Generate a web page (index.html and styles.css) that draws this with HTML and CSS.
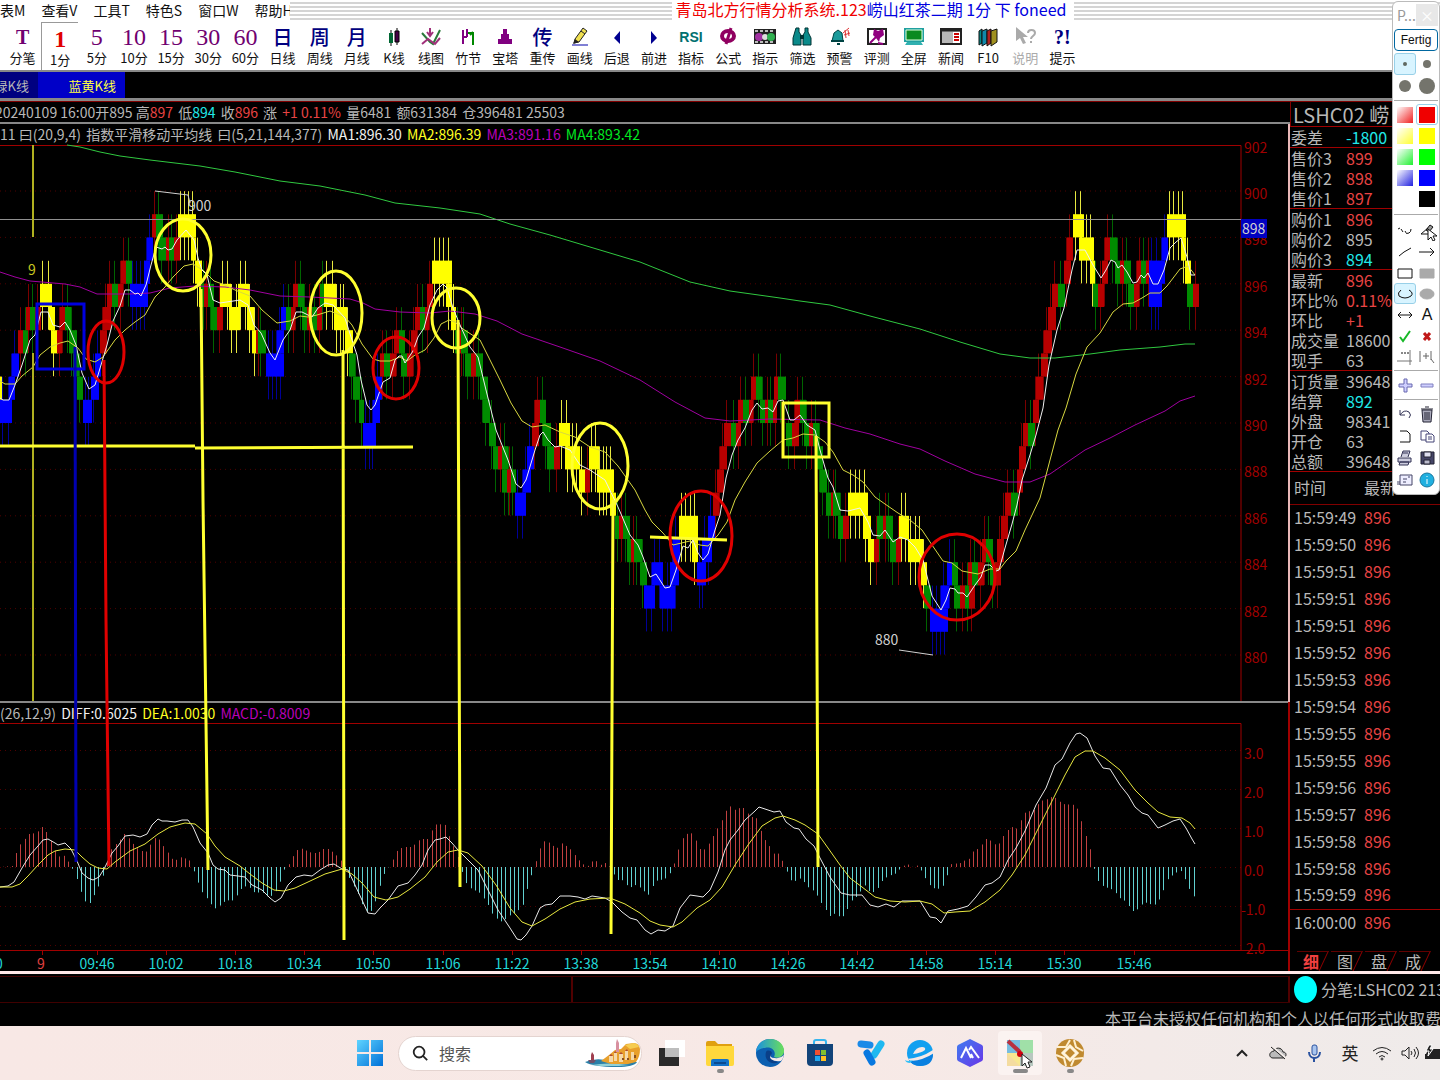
FILE: index.html
```html
<!DOCTYPE html>
<html lang="zh-CN">
<head>
    <meta charset="UTF-8">
    <meta name="viewport" content="width=device-width, initial-scale=1.0">
    <title>青岛北方行情分析系统</title>
    <link rel="stylesheet" href="styles.css">
</head>
<body>
    <header class="menubar">
        <nav class="menus">
            <button>表M</button>
            <button>查看V</button>
            <button>工具T</button>
            <button>特色S</button>
            <button>窗口W</button>
            <button>帮助H</button>
        </nav>
        <h1 class="title"><span class="red">青岛北方行情分析系统.123</span><span class="blue">崂山红茶二期 1分 下 foneed</span></h1>
    </header>

    <div class="toolbar">
        <button><span class="glyph small">T</span>分笔</button>
        <button class="pressed"><span class="glyph">1</span>1分</button>
        <button><span class="glyph">5</span>5分</button>
        <button><span class="glyph">10</span>10分</button>
        <button><span class="glyph">15</span>15分</button>
        <button><span class="glyph">30</span>30分</button>
        <button><span class="glyph">60</span>60分</button>
        <button><span class="glyph han">日</span>日线</button>
        <button><span class="glyph han">周</span>周线</button>
        <button><span class="glyph han">月</span>月线</button>
        <button><svg viewBox="0 0 24 22"><path d="M9 4v16M15 2v17" stroke="#000"/><path d="M7 7h4v10H7z" fill="#063"/><path d="M13 5h4v11h-4z" fill="#404" stroke="#000"/></svg>K线</button>
        <button><svg viewBox="0 0 24 22" fill="none" stroke-width="2"><path d="M3 7l8 9 3 2 7-14" stroke="#2a7a3a"/><path d="M3 18l6-5 7 5 5-6M11 2v8M8 6l3 4 3-4" stroke="#a0307a"/></svg>线图</button>
        <button><svg viewBox="0 0 24 22" fill="none" stroke-width="2"><path d="M7 4v14M7 11h4M11 3v8" stroke="#800080"/><path d="M12 7h5v12M14 9l3-3" stroke="#080"/></svg>竹节</button>
        <button><svg viewBox="0 0 24 22" fill="#800080"><path d="M10 3h4v5h2v5h3v5H5v-5h3V8h2z"/></svg>宝塔</button>
        <button><span class="glyph han">传</span>重传</button>
        <button><svg viewBox="0 0 24 22"><path d="M7 13L15 2l4 3-8 11-5 1z" fill="#f0e050" stroke="#222"/><path d="M13 5l4 3" stroke="#222"/><path d="M5 18l2-5 4 3z" fill="#222"/><path d="M4 19h16" stroke="#00a"/></svg>画线</button>
        <button><svg viewBox="0 0 24 22" fill="#000090"><path d="M15 5v13l-6-6z"/></svg>后退</button>
        <button><svg viewBox="0 0 24 22" fill="#000090"><path d="M9 5v13l6-6z"/></svg>前进</button>
        <button><span class="glyph rsi">RSI</span>指标</button>
        <button><svg viewBox="0 0 24 22" fill="none" stroke="#900060" stroke-width="4"><ellipse cx="12" cy="10" rx="6" ry="5"/><path d="M15 2L10 18" stroke-width="3"/></svg>公式</button>
        <button><svg viewBox="0 0 24 22"><path d="M1 3h22v15H1z" fill="#222"/><path d="M2 5h20M2 16h20" stroke="#bbb" stroke-width="2" stroke-dasharray="3 2"/><circle cx="6" cy="11" r="4" fill="#a030a0"/><circle cx="12" cy="11" r="3" fill="#ddd"/><circle cx="18" cy="11" r="4" fill="#30b050"/></svg>指示</button>
        <button><svg viewBox="0 0 24 22"><path d="M6 2h3v4l2 3v10H3v-7zM15 2h3v4l3 6v7h-8V9l2-3z" fill="#0a8a8a" stroke="#033"/><path d="M10 9h4v4h-4z" fill="#033"/></svg>筛选</button>
        <button><svg viewBox="0 0 24 22"><path d="M4 15l2-8 4-3 4 3 1 8z" fill="#1a9a9a" stroke="#044"/><path d="M3 15h13M9 18h3" stroke="#044" stroke-width="2"/><path d="M15 7l6-5M16 9l6-2M17 4l1 8M20 4l1 6" stroke="#d33"/></svg>预警</button>
        <button><svg viewBox="0 0 24 22"><path d="M3 3h18v15H3z" fill="#fff" stroke="#222" stroke-width="2"/><path d="M9 3l4 2 5-2 1 6-4 3-1 4-3-4-3-3z" fill="#900080"/><path d="M5 17l6-6M13 17l5 1" stroke="#900080" stroke-width="2"/></svg>评测</button>
        <button><svg viewBox="0 0 24 22"><path d="M2 2h20v14H2z" fill="#20a0a0"/><path d="M4 4h16v10H4z" fill="#0a8a20" stroke="#dfd"/><path d="M5 16h14l2 3H3z" fill="#30b0b0"/></svg>全屏</button>
        <button><svg viewBox="0 0 24 22"><path d="M2 3h20v15H2z" fill="#b8b8b8" stroke="#222" stroke-width="2"/><path d="M2 4h20" stroke="#222" stroke-width="3"/><path d="M14 6h7v11h-7z" fill="#fff"/><path d="M15 8h5M15 11h5M15 14h5" stroke="#c00" stroke-width="2"/></svg>新闻</button>
        <button><svg viewBox="0 0 24 22" stroke="#111"><path d="M3 5l3-2v14l-3 2z" fill="#088"/><path d="M6 5l5-2v14l-5 3z" fill="#18a"/><path d="M11 5l4-2v14l-4 3z" fill="#b02020"/><path d="M15 5l6-2v13l-6 4z" fill="#a09020"/></svg>F10</button>
        <button disabled><svg viewBox="0 0 24 22" fill="#aaa"><path d="M3 1v14l4-3 3 6 3-1-3-6h5z"/><path d="M15 7c0-4 7-4 7 0 0 3-4 3-4 6M18 15v2" fill="none" stroke="#aaa" stroke-width="2"/></svg>说明</button>
        <button><span class="glyph tip">?!</span>提示</button>
    </div>

    <div class="tabs">
        <button class="cut">绿K线</button>
        <button class="active">蓝黄K线</button>
    </div>

    <main class="workspace">
        <section class="left">
            <div class="quote">20240109 16:00开895 <span>高</span><span class="up">897</span> <span class="item">低</span><span class="down">894</span> <span class="item">收</span><span class="up">896</span> <span class="item">涨</span> <span class="up item">+1 0.11%</span> <span class="item">量6481</span> <span class="item">额631384</span> <span class="item">仓396481 25503</span></div>
            <div class="chart">
                <div class="legend">11 曰(20,9,4) <span class="item">指数平滑移动平均线</span> <span class="item">曰(5,21,144,377)</span> <span class="white item">MA1:896.30</span> <span class="yellow item">MA2:896.39</span> <span class="magenta item">MA3:891.16</span> <span class="lime item">MA4:893.42</span></div>
                <svg id="price" viewBox="0 145 1290 556"></svg>
                <div class="legend macd">(26,12,9) <span class="white item">DIFF:0.6025</span> <span class="yellow item">DEA:1.0030</span> <span class="magenta item">MACD:-0.8009</span></div>
                <svg id="macd" viewBox="0 723 1290 248"></svg>
                <svg id="marks" class="overlay" viewBox="0 124 1290 847">
                    <g fill="none" stroke="#ffff30" stroke-width="3">
                        <path d="M0 446H195M195 448L413 447M201 289L203 500L208 870M343 350L344 940M458 320L460 887M613 500L611 934M816 436L818 867M650 537L727 540"/>
                        <ellipse cx="183" cy="255" rx="28" ry="36"/>
                        <ellipse cx="336" cy="313" rx="26" ry="42"/>
                        <ellipse cx="456" cy="318" rx="24" ry="30"/>
                        <ellipse cx="600" cy="466" rx="28" ry="43"/>
                        <rect x="783" y="403" width="46" height="54"/>
                    </g>
                    <g fill="none" stroke="#e00000" stroke-width="3">
                        <path d="M104 360L106 620L109 866"/>
                        <ellipse cx="106" cy="352" rx="18" ry="31"/>
                        <ellipse cx="396" cy="368" rx="23" ry="31"/>
                        <ellipse cx="701" cy="536" rx="31" ry="45"/>
                        <ellipse cx="957" cy="577" rx="38" ry="43"/>
                    </g>
                    <g fill="none" stroke="#0000e0" stroke-width="3">
                        <rect x="37" y="304" width="47" height="65"/>
                        <path d="M75 347L76 862" stroke="#0000b0"/>
                    </g>
                    <path d="M1289 124V702" stroke="#e8b8b8" stroke-width="2"/>
                    <path d="M1289 702V971" stroke="#a00000" stroke-width="2"/>
                </svg>
            </div>
        </section>

        <aside class="side">
            <h2>LSHC02 崂</h2>
            <table class="quotes">
                <tr class="line"><th>委差</th><td class="down">-1800</td></tr>
                <tr><th>售价3</th><td class="up">899</td></tr>
                <tr><th>售价2</th><td class="up">898</td></tr>
                <tr class="line"><th>售价1</th><td class="up">897</td></tr>
                <tr><th>购价1</th><td class="up">896</td></tr>
                <tr><th>购价2</th><td>895</td></tr>
                <tr class="line"><th>购价3</th><td class="down">894</td></tr>
                <tr><th>最新</th><td class="up">896</td></tr>
                <tr><th>环比%</th><td class="up">0.11%</td></tr>
                <tr><th>环比</th><td class="up">+1</td></tr>
                <tr><th>成交量</th><td>18600</td></tr>
                <tr class="line"><th>现手</th><td>63</td></tr>
                <tr><th>订货量</th><td>39648</td></tr>
                <tr><th>结算</th><td class="down">892</td></tr>
                <tr><th>外盘</th><td>98341</td></tr>
                <tr><th>开仓</th><td>63</td></tr>
                <tr class="line"><th>总额</th><td>39648</td></tr>
            </table>
            <table class="ticks">
                <thead><tr><th>时间</th><th>最新</th></tr></thead>
                <tbody>
                    <tr><td>15:59:49</td><td class="up">896</td></tr>
                    <tr><td>15:59:50</td><td class="up">896</td></tr>
                    <tr><td>15:59:51</td><td class="up">896</td></tr>
                    <tr><td>15:59:51</td><td class="up">896</td></tr>
                    <tr><td>15:59:51</td><td class="up">896</td></tr>
                    <tr><td>15:59:52</td><td class="up">896</td></tr>
                    <tr><td>15:59:53</td><td class="up">896</td></tr>
                    <tr><td>15:59:54</td><td class="up">896</td></tr>
                    <tr><td>15:59:55</td><td class="up">896</td></tr>
                    <tr><td>15:59:55</td><td class="up">896</td></tr>
                    <tr><td>15:59:56</td><td class="up">896</td></tr>
                    <tr><td>15:59:57</td><td class="up">896</td></tr>
                    <tr><td>15:59:58</td><td class="up">896</td></tr>
                    <tr><td>15:59:58</td><td class="up">896</td></tr>
                    <tr><td>15:59:59</td><td class="up">896</td></tr>
                    <tr class="last"><td>16:00:00</td><td class="up">896</td></tr>
                </tbody>
            </table>
            <nav class="sheets">
                <button class="on">细</button>
                <button>图</button>
                <button>盘</button>
                <button>成</button>
            </nav>
        </aside>
    </main>

    <footer class="status">
        <div class="cells"><span></span><span></span></div>
        <div class="feed"><i class="lamp"></i>分笔:LSHC02 213</div>
    </footer>
    <div class="notice"><p>本平台未授权任何机构和个人以任何形式收取费用</p></div>

    <div class="taskbar">
        <div class="apps">
            <button aria-label="开始"><svg viewBox="0 0 32 32"><defs><linearGradient id="win" x2="1" y2="1"><stop stop-color="#5fd4ff"/><stop offset="1" stop-color="#0070d8"/></linearGradient></defs><path d="M3 3h12v12H3zM17 3h12v12H17zM3 17h12v12H3zM17 17h12v12H17z" fill="url(#win)"/></svg></button>
            <label class="search">
                <svg viewBox="0 0 20 20" fill="none" stroke="#222" stroke-width="2"><circle cx="9" cy="9" r="6"/><path d="M13 13l5 5"/></svg>
                <input type="text" placeholder="搜索" aria-label="搜索">
                <svg class="art" viewBox="0 0 56 30"><path d="M0 24q12-5 24-1l28 1q-3 5-20 5-24 0-32-5z" fill="#2a7fa8"/><path d="M6 27q18-3 38 0l-10 1H16z" fill="#8fd0d8"/><path d="M16 23l8-6 6-5 6-1 5-5 8-1q5 0 6 6 0 8-4 13l-8 2H26z" fill="#e8a02c"/><path d="M40 7l9-2q4 1 5 4l-9 2z" fill="#f6cc50"/><path d="M24 18h4v6h-4zM29 15h3v8h-3zM34 16h4v8h-4zM40 13h3v9h-3zM46 14h3v8h-3z" fill="#f4d8a8"/><path d="M24 18l2-2 2 2zM34 16l2-2 2 2zM29 15l1-2 2 2zM40 13l2-2 1 2z" fill="#b04a30"/><path d="M31 14V5l1-4 2 4v9z" fill="#d890a0"/><path d="M42 20h2v2h-2zM49 17h2v3h-2zM37 20h2v2h-2z" fill="#8a5020"/><path d="M6 24v-7l1-3 2 3v7z" fill="#a04050"/><path d="M3 22h8l-2 3H5z" fill="#70506a"/></svg>
            </label>
            <button aria-label="任务视图"><svg viewBox="0 0 32 32"><path d="M11 3h20v17H11z" fill="#fff"/><path d="M5 11h20v18H5z" fill="#2a2a2a"/><path d="M11 11h14v9H11z" fill="#bdbdbd"/></svg></button>
            <button class="run" aria-label="文件资源管理器"><svg viewBox="0 0 32 32"><path d="M2 6q0-2 2-2h7l3 3h14v6H2z" fill="#e0a010"/><path d="M2 9h28v18q0 2-2 2H4q-2 0-2-2z" fill="#ffd83c"/><path d="M7 29v-5q0-2 2-2h14q2 0 2 2v5z" fill="#1272c8"/><path d="M10 26h12" stroke="#0a4a90" stroke-width="2"/></svg></button>
            <button aria-label="Edge"><svg viewBox="0 0 32 32"><defs><linearGradient id="edge" x2="1"><stop stop-color="#1a90e0"/><stop offset="1" stop-color="#6be05a"/></linearGradient></defs><circle cx="16" cy="16" r="14" fill="#0c5fb0"/><path d="M2 15C3 7 9 2 16 2c9 0 14 6 14 12 0 5-5 8-10 6 3-6-3-11-9-9-4 0-7 2-9 4z" fill="url(#edge)"/><path d="M12 15c-2 7 3 12 10 11l5-2c-5 2-11-1-10-6l1-2c-1-3-5-3-6-1z" fill="#0a3f88"/><path d="M17 15q-3 6 4 6 5 1 9-3-1 4-3 6-12 1-11-6z" fill="#f6e9e6"/></svg></button>
            <button aria-label="Store"><svg viewBox="0 0 32 32"><path d="M10 8V5q0-2 2-2h8q2 0 2 2v3" fill="none" stroke="#35b5ee" stroke-width="2"/><path d="M3 7h26v18q0 4-4 4H7q-4 0-4-4z" fill="#12447a"/><path d="M11 13h5v5h-5z" fill="#f05030"/><path d="M17 13h5v5h-5z" fill="#80c030"/><path d="M11 19h5v5h-5z" fill="#20a8f0"/><path d="M17 19h5v5h-5z" fill="#ffc020"/></svg></button>
            <button aria-label="协作"><svg viewBox="0 0 32 32" fill="none" stroke-linecap="round" stroke-width="7"><path d="M7 7l9 1" stroke="#1a8ae8"/><path d="M27 7l-7 11" stroke="#1fb8f0"/><path d="M13 16l5 9" stroke="#0878e0"/></svg></button>
            <button aria-label="浏览器"><svg viewBox="0 0 32 32"><circle cx="16" cy="16" r="13" fill="#12a0f0"/><path d="M29 17q0 12-13 12-8 0-12-7 14 0 25-5z" fill="#0a80e0"/><path d="M9 17q3-7 9-7 4 0 3 3-4 3-12 4z" fill="#f6e9e6"/><path d="M3 22q14-1 26-9l1 3q-10 7-23 8z" fill="#f6e9e6"/><path d="M1 23q3 2 8 0l-3 3q-4 0-5-3z" fill="#30c0f8"/></svg></button>
            <button aria-label="山"><svg viewBox="0 0 32 32"><defs><linearGradient id="hex" x2="1" y2="1"><stop stop-color="#3f7df0"/><stop offset="1" stop-color="#6a35e8"/></linearGradient></defs><path d="M16 2l12 6q1 1 1 2v12q0 1-1 2l-12 6-12-6q-1-1-1-2V10q0-1 1-2z" fill="url(#hex)"/><path d="M7 21l5-10 5 10M15 13l2-3 8 11M19 21l-2-4" fill="none" stroke="#fff" stroke-width="2"/></svg></button>
            <button class="run current" aria-label="行情"><svg viewBox="0 0 32 32"><path d="M3 3h13v13H3z" fill="#78bde0"/><path d="M16 3h13v13H16z" fill="#a0e0a8"/><path d="M3 16h13v13H3z" fill="#f4dca0"/><path d="M16 16h13v13H16z" fill="#b8c8c0"/><path d="M3 16l13 0v13z" fill="#f8e890"/><path d="M4 4l12 11" stroke="#b83040" stroke-width="4"/><circle cx="16" cy="17" r="3" fill="#d00010"/><path d="M18 17v12l3-3 2 5 3-1-2-5h4z" fill="#fff" stroke="#222"/></svg></button>
            <button class="run" aria-label="交易"><svg viewBox="0 0 32 32" fill="none"><circle cx="16" cy="16" r="14" fill="#c08a30"/><path d="M16 9l7 7-7 7-7-7z" stroke="#fff4dc" stroke-width="3"/><path d="M3 10h9l4-7M20 3l2 7 7 4M29 21l-9 1-3 7M12 29l-2-8-8-3" stroke="#fff0d0" stroke-width="2"/></svg></button>
        </div>
        <div class="tray">
            <button aria-label="更多"><svg viewBox="0 0 20 20" fill="none" stroke="#222" stroke-width="2"><path d="M5 13l5-5 5 5"/></svg></button>
            <button aria-label="云"><svg viewBox="0 0 20 20" fill="none" stroke="#222"><path d="M5 15h10c4-1 4-6 0-6-1-5-8-5-9-1-6 1-5 7-1 7z" fill="#bbb"/><path d="M5 4l14 12" stroke="#f2ebe8" stroke-width="2"/><path d="M3 4l14 12"/></svg></button>
            <button aria-label="麦克风"><svg viewBox="0 0 20 20" fill="none" stroke="#2a52a0"><rect x="8" y="2" width="5" height="10" rx="2" fill="#a8c4ee"/><path d="M5 9c0 8 11 8 11 0M10 15v4" stroke-width="2"/></svg></button>
            <button>英</button>
            <button class="tight" aria-label="网络"><svg viewBox="0 0 20 20" fill="none" stroke="#222"><path d="M1 8q9-7 18 0M4 11q6-5 12 0M7 14q3-3 6 0"/><circle cx="10" cy="16" r="1"/></svg></button>
            <button class="tight" aria-label="音量"><svg viewBox="0 0 20 20" fill="none" stroke="#222"><path d="M2 8h3l4-4v12l-4-4H2zM11 8q2 2 0 4M14 6q3 4 0 8M16 4q5 6 0 12"/></svg></button>
            <button class="tight" aria-label="电池"><svg viewBox="0 0 20 20"><path d="M4 7h15v8H2v-4" fill="#222" stroke="#222" stroke-width="2"/><path d="M5 2L2 8h3l-1 5 5-7H6l2-4z" fill="#222" stroke="#fff"/></svg></button>
        </div>
    </div>

    <div class="palette">
        <div class="caption"><span>P...</span><button aria-label="close">×</button></div>
        <button class="done">Fertig</button>
        <div class="group">
            <button class="sel" aria-label="1"><svg viewBox="0 0 20 20"><circle cx="10" cy="10" r="2" fill="#606860"/></svg></button>
            <button aria-label="2"><svg viewBox="0 0 20 20"><circle cx="10" cy="10" r="4" fill="#74746c"/></svg></button>
            <button aria-label="3"><svg viewBox="0 0 20 20"><circle cx="10" cy="10" r="6" fill="#74746c"/></svg></button>
            <button aria-label="4"><svg viewBox="0 0 20 20"><circle cx="10" cy="10" r="8" fill="#74746c"/></svg></button>
        </div>
        <div class="group colors">
            <button aria-label="soft red"><i class="swatch soft-red"></i></button><button class="sel plain" aria-label="red"><i class="swatch solid-red"></i></button>
            <button aria-label="soft yellow"><i class="swatch soft-yellow"></i></button><button aria-label="yellow"><i class="swatch solid-yellow"></i></button>
            <button aria-label="soft green"><i class="swatch soft-green"></i></button><button aria-label="green"><i class="swatch solid-green"></i></button>
            <button aria-label="soft blue"><i class="swatch soft-blue"></i></button><button aria-label="blue"><i class="swatch solid-blue"></i></button>
            <span></span><button aria-label="black"><i class="swatch solid-black"></i></button>
        </div>
        <div class="group tools">
            <button aria-label="free"><svg viewBox="0 0 20 20"><path d="M3 8l2-1M6 8l2 3M10 10q1 4 4 2 2-1 2-4"/></svg></button>
            <button aria-label="marker"><svg viewBox="0 0 20 20"><path d="M4 13l7-6M4 13h7M9 9l4-5 3 2-4 5z" fill="#999"/><path d="M11 8v11l3-3 2 4 2-1-2-4h4z" fill="#fff"/></svg></button>
            <button aria-label="line"><svg viewBox="0 0 20 20"><path d="M4 14l5-4 7-4"/></svg></button>
            <button aria-label="arrow"><svg viewBox="0 0 20 20"><path d="M2 10h15M13 6l4 4-4 4"/></svg></button>
            <button aria-label="frame"><svg viewBox="0 0 20 20"><path d="M3 6h14v9H3z"/></svg></button>
            <button aria-label="box"><svg viewBox="0 0 20 20"><path d="M3 6h14v9H3z" fill="#aaa" stroke="#aaa"/></svg></button>
            <button class="sel" aria-label="ellipse"><svg viewBox="0 0 20 20"><path d="M6 6q-4 3-2 6 6 4 12 0 3-3-2-6"/></svg></button>
            <button aria-label="disc"><svg viewBox="0 0 20 20"><ellipse cx="10" cy="10" rx="7" ry="5" fill="#aaa" stroke="#aaa"/></svg></button>
            <button aria-label="double arrow"><svg viewBox="0 0 20 20"><path d="M3 10h14M6 7l-3 3 3 3M14 7l3 3-3 3"/></svg></button>
            <button aria-label="text" class="letter">A</button>
            <button aria-label="check"><svg viewBox="0 0 20 20"><path d="M5 11l3 4 7-10" stroke="#18b828" stroke-width="2"/></svg></button>
            <button aria-label="cross"><svg viewBox="0 0 20 20"><path d="M7 7l6 7M13 7l-6 7" stroke="#c01818" stroke-width="3"/></svg></button>
            <button aria-label="crop"><svg viewBox="0 0 20 20"><path d="M2 14h15M15 3v15" stroke="#777"/><path d="M6 6h8" stroke-dasharray="2 1"/></svg></button>
            <button aria-label="range"><svg viewBox="0 0 20 20"><path d="M3 4v11M14 4v9M6 9h6M9 6v6M14 12l3 4" stroke="#666"/></svg></button>
        </div>
        <div class="group">
            <button aria-label="plus"><svg viewBox="0 0 20 20"><path d="M9 4h3v5h5v3h-5v5H9v-5H4V9h5z" fill="#d0d0ff" stroke="#6868b0"/></svg></button>
            <button aria-label="minus"><svg viewBox="0 0 20 20"><path d="M4 9h12v3H4z" fill="#d0d0ff" stroke="#8080c0"/></svg></button>
        </div>
        <div class="group">
            <button aria-label="undo"><svg viewBox="0 0 20 20" fill="none" stroke="#335"><path d="M5 6v5h5M5 11q4-6 9-3 3 3 0 6"/></svg></button>
            <button aria-label="trash"><svg viewBox="0 0 20 20" fill="#aab" stroke="#223"><path d="M5 6h10l-1 12H6zM4 5h12M8 3h4M8 8v8M10 8v8M12 8v8"/></svg></button>
            <button aria-label="page"><svg viewBox="0 0 20 20" fill="none" stroke="#111"><path d="M5 5h7l3 3v8H5"/></svg></button>
            <button aria-label="copy"><svg viewBox="0 0 20 20" fill="#fff" stroke="#447"><path d="M4 5h6l2 2v7H4z"/><path d="M9 8h6l2 2v6H9zM11 11h4M11 13h4"/></svg></button>
            <button aria-label="print"><svg viewBox="0 0 20 20" fill="#ccd" stroke="#335"><path d="M6 9l2-6h7l-2 6M3 10h13v4H3zM5 14h9l-1 3H4zM8 5h5"/></svg></button>
            <button aria-label="save"><svg viewBox="0 0 20 20" fill="#446" stroke="#223"><path d="M4 4h13v12H4z"/><path d="M7 4h7v5H7z" fill="#dde"/><path d="M7 12h6v4H7z" fill="#bbc"/></svg></button>
            <button aria-label="mail"><svg viewBox="0 0 20 20" fill="#eef" stroke="#446"><path d="M5 5h12v10H5zM8 9h4M8 12h3M2 12h3M2 14h3M13 7h2"/></svg></button>
            <button aria-label="info"><svg viewBox="0 0 20 20"><circle cx="10" cy="10" r="7" fill="#20b0e0" stroke="#1878a0"/><path d="M10 6v1M10 9v5" stroke="#fff"/></svg></button>
        </div>
    </div>

    <script src="script.js"></script>
</body>
</html>
```
FILE: styles.css
```css
* {
    box-sizing: border-box;
}
body {
    margin: 0;
    background: #000;
    color: #b8b8b8;
    font-family: "Noto Sans CJK SC", "Noto Sans", sans-serif;
    font-size: 14px;
    line-height: 20px;
    overflow: hidden;
}
button {
    margin: 0;
    padding: 0;
    border: none;
    background: none;
    color: inherit;
    font: inherit;
    white-space: nowrap;
}
svg {
    display: block;
}
table {
    border-collapse: collapse;
}
h1, h2, p {
    margin: 0;
    font-weight: normal;
}
.red { color: #f00000; }
.blue { color: #0000e0; }
.up { color: #e84444; }
.down { color: #20e8e8; }
.white { color: #f0f0f0; }
.yellow { color: #ffff20; }
.magenta { color: #b800b8; }
.lime { color: #00e820; }

/* menu and tool bar */
.menubar {
    display: flex;
    height: 20px;
    background: repeating-linear-gradient(#fff 0 2px, #d4d4d4 2px 4px);
    color: #111;
}
.menus {
    display: flex;
    gap: 16px;
    flex: 0 0 290px;
    overflow: hidden;
    background: #fff;
    line-height: 18px;
}
.title {
    margin: 0 auto;
    padding: 0 8px 0 4px;
    background: #fff;
    font-size: 16px;
    line-height: 18px;
    transform: translateX(8px);
}
.toolbar {
    display: grid;
    grid-template-columns: repeat(29, 1fr);
    height: 52px;
    padding-left: 4px;
    padding-right: 359px;
    background: #fff;
    border-bottom: 2px solid #888;
    color: #111;
    font-size: 13px;
}
.toolbar button {
    display: flex;
    flex-direction: column;
    align-items: center;
    padding-top: 6px;
    line-height: 20px;
}
.toolbar .pressed {
    margin-top: 2px;
    padding-top: 5px;
    border-left: 1px solid #999;
    border-top: 1px solid #999;
}
.toolbar button:disabled {
    color: #aaa;
}
.toolbar svg {
    width: 24px;
    height: 22px;
}
.glyph {
    height: 22px;
    color: #700070;
    font-family: "Liberation Serif", serif;
    font-size: 24px;
    line-height: 22px;
}
.pressed .glyph {
    color: #e00000;
    font-weight: bold;
}
.glyph.small {
    font-size: 20px;
    font-weight: bold;
}
.glyph.han {
    color: #000080;
    font-family: "Noto Sans CJK SC", sans-serif;
    font-size: 20px;
    font-weight: 500;
}
.glyph.rsi {
    color: #007070;
    font-family: "Liberation Sans Narrow", "Liberation Sans", sans-serif;
    font-size: 14px;
    font-weight: bold;
}
.glyph.tip {
    color: #000080;
    font-size: 20px;
    font-weight: bold;
}

.tabs {
    display: flex;
    height: 29px;
    border-bottom: 3px solid #888;
    font-size: 13px;
}
.tabs button {
    display: flex;
    justify-content: flex-end;
    width: 38px;
    padding: 4px 9px 0 0;
    overflow: hidden;
    background: #000080;
}
.tabs .active {
    width: 87px;
    background: #0000c8;
    color: #ffff40;
}

/* workspace */
.workspace {
    display: grid;
    grid-template-columns: minmax(0, 1fr) 150px;
}
.quote,
.legend {
    overflow: hidden;
    white-space: nowrap;
}
.quote {
    height: 21px;
    border-top: 1px solid #800000;
    text-indent: -5px;
}
.item {
    margin-left: 2px;
}
.chart {
    position: relative;
    border-top: 2px solid #888;
}
.chart svg {
    width: 100%;
    height: auto;
    overflow: visible;
}
.legend {
    height: 21px;
}
.legend.macd {
    height: 22px;
    border-top: 2px solid #888;
}
.chart .overlay {
    position: absolute;
    inset: 0;
}
.axis {
    fill: #a00000;
    font-size: 14px;
}
.time {
    fill: #20d8d8;
    font-size: 14px;
    text-anchor: middle;
}
.note {
    fill: #d0d0d0;
    font-size: 14px;
}

.side {
    display: flex;
    flex-direction: column;
    overflow: hidden;
    border-top: 1px solid #800000;
    font-size: 16px;
}
.side h2 {
    height: 25px;
    padding-left: 2px;
    border-left: 1px solid #800000;
    border-bottom: 1px solid #a00000;
    font-size: 20px;
    line-height: 26px;
    white-space: nowrap;
}
.side th {
    font-weight: normal;
    text-align: left;
}
.quotes {
    width: 100%;
}
.quotes th,
.quotes td {
    height: 20px;
    padding: 0 0 0 1px;
    line-height: 20px;
}
.quotes th {
    width: 55px;
}
.quotes .line {
    border-bottom: 1px solid #a00000;
}
.ticks {
    width: 100%;
}
.ticks th,
.ticks td {
    height: 27px;
    padding: 0 0 2px 4px;
}
.ticks th {
    height: 32px;
    border-bottom: 1px solid #800000;
}
.ticks th:first-child {
    width: 70px;
}
.ticks .last {
    border-top: 1px solid #a00000;
}
.sheets {
    display: flex;
    gap: 2px;
    margin-top: auto;
    padding-left: 7px;
    line-height: 19px;
}
.sheets button {
    display: flex;
    gap: 4px;
    width: 32px;
    padding-left: 6px;
    border-top: 1px solid #600000;
}
.sheets button::after {
    content: "";
    flex: none;
    width: 1px;
    background: #900000;
    transform: skewX(-25deg);
}
.sheets .on {
    color: #f04040;
    font-weight: bold;
}

.status {
    display: grid;
    grid-template-columns: minmax(0, 1fr) 150px;
    height: 33px;
    border-top: 3px solid #ffe8e8;
    font-size: 16px;
}
.cells {
    display: grid;
    grid-template-columns: 4fr 5fr;
    margin: 2px 0 1px;
    border-bottom: 1px solid #400000;
}
.cells span {
    border-top: 1px solid #400000;
    border-right: 2px solid #500000;
}
.feed {
    display: flex;
    align-items: center;
    gap: 4px;
    padding-left: 4px;
    white-space: nowrap;
    overflow: hidden;
}
.lamp {
    flex: none;
    width: 23px;
    height: 27px;
    border-radius: 50%;
    background: #00ffff;
}
.notice {
    height: 22px;
}
.notice p {
    width: 335px;
    height: 22px;
    margin-left: auto;
    overflow: hidden;
    font-size: 16px;
    line-height: 28px;
    white-space: nowrap;
}

/* taskbar */
.taskbar {
    display: grid;
    grid-template-columns: 1fr auto 1fr;
    height: 54px;
    background: linear-gradient(90deg, #f8e8e5, #f7e9e6 60%, #efebea);
    color: #222;
}
.apps {
    grid-column: 2;
    display: flex;
    align-items: center;
    gap: 6px;
}
.apps button {
    display: flex;
    flex-direction: column;
    align-items: center;
    width: 44px;
    height: 44px;
    padding-top: 6px;
    border-radius: 4px;
}
.apps button svg {
    width: 32px;
    height: 32px;
}
.apps .current {
    background: #fbf3f1;
}
.apps .run::after {
    content: "";
    width: 7px;
    height: 4px;
    border-radius: 2px;
    background: #888;
}
.apps .current::after {
    width: 15px;
}
.search {
    display: flex;
    align-items: center;
    gap: 10px;
    width: 244px;
    height: 35px;
    padding: 0 0 0 12px;
    border: 1px solid #e4d4d0;
    border-radius: 18px;
    background: #fff;
}
.search svg {
    flex: none;
    width: 18px;
    height: 18px;
}
.search .art {
    width: 56px;
    height: 30px;
}
.search input {
    flex: 1;
    min-width: 0;
    padding: 0;
    border: none;
    background: none;
    font: inherit;
    font-size: 16px;
}
.search input::placeholder {
    color: #555;
}
.tray {
    display: flex;
    align-items: center;
    justify-content: flex-end;
    overflow: hidden;
    font-size: 17px;
}
.tray button {
    display: flex;
    flex: none;
    justify-content: center;
    width: 36px;
}
.tray .tight {
    width: 28px;
}
.tray .tight:last-child {
    width: 16px;
    justify-content: flex-start;
}
.tray svg {
    flex: none;
    width: 20px;
    height: 20px;
}

/* floating drawing palette */
.palette {
    position: absolute;
    top: 1px;
    right: 0;
    width: 48px;
    padding: 2px 1px 0;
    border: 1px solid #bbb;
    border-radius: 6px;
    background: #fff;
    color: #111;
}
.caption {
    display: flex;
    justify-content: space-between;
    padding-left: 3px;
    color: #999;
    line-height: 22px;
}
.caption button {
    width: 22px;
    background: #e8e8e8;
    color: #fff;
    line-height: 20px;
}
.done {
    width: 100%;
    height: 22px;
    margin: 3px 0 2px;
    border: 1px solid #0067a0;
    border-radius: 4px;
    font-family: "Liberation Sans", sans-serif;
    font-size: 12px;
}
.group {
    display: grid;
    grid-template-columns: 1fr 1fr;
    grid-auto-rows: 22px;
    padding-bottom: 3px;
}
.group + .group {
    padding-top: 3px;
    border-top: 1px solid #aaa;
}
.group.tools {
    grid-auto-rows: 21px;
    padding-top: 5px;
}
.group.colors {
    grid-auto-rows: 21px;
    padding-bottom: 5px;
}
.group button {
    display: flex;
    align-items: center;
    justify-content: center;
    border: 1px solid transparent;
    border-radius: 3px;
}
.group .sel {
    border-color: #98d0e8;
    background: #d8f4ff;
}
.group .plain {
    background: #fff;
}
.group svg {
    flex: none;
    width: 20px;
    height: 20px;
}
.tools svg {
    fill: none;
    stroke: #111;
}
.letter {
    font-family: "Liberation Sans", sans-serif;
    font-size: 16px;
}
.swatch {
    width: 16px;
    height: 16px;
}
.soft-red { background: linear-gradient(135deg, #fff, #f02020); }
.soft-yellow { background: linear-gradient(135deg, #fff, #ffff30); }
.soft-green { background: linear-gradient(135deg, #fff, #20f030); }
.soft-blue { background: linear-gradient(135deg, #fff, #2020e0); }
.solid-red { background: #f00000; }
.solid-yellow { background: #ffff00; }
.solid-green { background: #00ff00; }
.solid-blue { background: #0000ff; }
.solid-black { background: #000; }
```
FILE: script.js
```js
const NS = 'http://www.w3.org/2000/svg';

function add(svg, tag, attrs, text) {
    const el = document.createElementNS(NS, tag);
    for (const key in attrs) el.setAttribute(key, attrs[key]);
    if (text) el.textContent = text;
    svg.appendChild(el);
}

const body = { r: '#b80000', g: '#008c00', b: '#0000ff', y: '#ffff00' };
const wick = { r: '#7a0000', g: '#006400', b: '#000098', y: '#e8e840' };

// left edge, right edge, top price, colour
const runs = `-3 2 892 y,0 12 891 b,9 15 892 b,12 19 893 b,18 24 894 r,23 28 894 g,26 31 895 r,30 36 895 g,35 41 895 r,
40 52 896 y,49 55 895 y,51 58 894 y,57 62 894 r,60 66 895 r,65 71 895 g,69 77 894 g,73 79 893 g,77 83 892 g,
83 92 891 b,91 99 892 b,95 101 893 b,100 107 894 r,103 111 895 r,107 113 896 r,112 118 896 g,118 123 896 r,
121 127 897 r,126 132 897 g,130 148 896 b,144 150 897 b,147 153 898 b,152 157 899 r,156 163 899 g,159 167 898 g,
166 169 898 r,169 175 898 g,174 180 898 r,178 196 899 y,191 196 898 y,195 202 897 y,199 203 896 y,201 206 896 g,
204 210 896 r,208 214 896 g,211 218 895 g,217 223 895 r,220 231 896 y,229 240 895 y,238 249 896 y,247 254 895 y,
252 258 894 y,256 260 894 r,258 266 894 g,266 284 893 b,277 284 894 b,281 288 895 b,286 292 895 g,291 295 895 r,
293 299 896 r,298 304 896 g,302 308 895 g,307 312 895 r,312 318 895 g,317 322 895 r,320 325 896 g,324 336 896 y,
334 347 895 y,345 353 894 y,349 355 893 g,353 360 892 g,359 364 891 g,363 376 890 b,373 380 891 b,375 382 892 b,
380 385 893 r,384 391 893 g,390 396 893 r,394 400 894 r,399 405 894 g,401 408 893 g,407 413 893 r,411 417 894 r,
415 421 895 r,420 426 895 g,425 429 895 r,427 433 896 r,432 452 897 y,446 452 896 y,451 456 895 y,455 460 894 g,
459 463 894 r,461 468 894 g,465 473 893 g,471 477 893 r,476 483 893 g,480 488 892 g,483 490 891 g,489 496 890 g,
493 500 889 g,498 503 889 r,502 516 888 g,502 508 889 g,507 511 888 r,515 526 887 b,523 531 888 b,527 534 889 b,
532 539 890 r,535 541 891 r,540 546 891 g,543 551 890 g,547 555 889 g,554 560 889 r,559 570 890 y,565 580 889 y,
579 586 888 y,585 590 888 r,589 599 889 y,597 614 888 y,610 616 887 y,615 620 886 g,619 624 886 r,623 630 886 g,
627 632 885 g,631 635 885 r,634 642 885 g,640 647 884 g,644 655 883 b,652 663 884 b,660 675 883 b,670 679 884 b,
673 680 885 b,679 698 886 y,692 698 885 y,697 706 884 b,702 712 885 b,708 715 886 b,713 719 887 r,717 724 888 r,
720 727 889 r,724 731 890 r,731 737 890 g,736 741 890 r,738 744 891 r,743 750 891 g,749 753 891 r,751 757 892 r,
756 762 892 g,760 766 891 g,765 769 891 r,768 774 891 g,773 777 891 r,774 779 892 r,778 786 892 g,786 793 890 g,
792 799 890 r,795 801 891 r,800 806 891 g,804 810 890 g,809 814 890 r,813 819 890 g,817 823 889 g,820 827 888 g,
826 833 887 g,831 835 887 r,833 840 887 g,838 845 886 g,843 849 886 r,848 868 887 y,863 871 886 y,868 875 885 y,
874 879 885 r,877 884 886 g,883 887 886 r,886 893 886 g,890 897 885 g,896 901 885 r,899 909 886 y,908 923 885 y,
921 927 884 y,924 931 883 g,930 948 882 b,941 949 883 b,947 952 884 b,952 958 884 g,954 961 883 g,960 966 883 r,
965 970 883 g,969 975 883 r,968 973 884 r,972 978 884 g,978 984 884 r,982 988 885 r,986 993 885 g,990 997 884 g,
995 1001 884 r,997 1004 885 r,1001 1008 886 r,1005 1012 887 r,1011 1018 887 g,1017 1023 888 r,1019 1026 889 r,
1023 1029 890 r,1028 1035 890 g,1033 1039 891 r,1036 1043 892 r,1041 1048 893 r,1044 1052 894 r,1048 1056 895 r,
1052 1059 896 r,1058 1065 896 g,1064 1071 897 r,1067 1073 898 r,1073 1084 899 y,1079 1094 898 y,1090 1095 897 y,
1093 1099 896 g,1098 1104 896 r,1102 1108 897 r,1105 1111 898 r,1110 1117 898 g,1115 1121 897 g,1120 1125 897 r,
1124 1131 897 g,1128 1135 896 g,1134 1139 896 r,1137 1142 897 r,1141 1147 897 g,1146 1151 897 r,1149 1162 896 b,
1149 1165 897 b,1162 1168 898 b,1167 1186 899 y,1181 1186 898 y,1185 1191 897 y,1187 1194 896 g,1193 1199 896 r`
    .split(',').map(s => s.trim().split(' '));

const price = document.getElementById('price');
const yOf = p => 655 - (p - 880) * 23.2;

// grid and frame
for (let p = 880; p <= 900; p += 2) {
    add(price, 'path', { d: `M0 ${yOf(p)}H1241`, stroke: '#500000', 'stroke-dasharray': '1 4' });
}
add(price, 'path', { d: 'M0 145.5H1241V701', fill: 'none', stroke: '#a00000' });
for (let p = 880; p <= 902; p += 2) {
    add(price, 'text', { x: 1244, y: yOf(p) + 8, class: 'axis' }, String(p));
}

for (const [l, r, top, c] of runs) {
    const x0 = +l, x1 = +r, y = yOf(+top);
    const n = Math.max(1, Math.round((x1 - x0 - 6) / 4.3) + 1);
    const step = n > 1 ? (x1 - x0 - 6) / (n - 1) : 0;
    for (let i = 0; i < n; i++) {
        const x = Math.round(x0 + 2 + i * step) + 0.5;
        add(price, 'path', { d: `M${x} ${y - 23}V${y + 46}`, stroke: wick[c] });
    }
}
for (const [l, r, top, c] of runs) {
    add(price, 'rect', { x: l, y: yOf(+top), width: r - l, height: 23.2, fill: body[c] });
}

function line(svg, stroke, points) {
    add(svg, 'polyline', { points, fill: 'none', stroke });
}

line(price, '#30c840', '67,145 80,147 100,152 120,156 150,160 200,166 235,172 280,181 320,186 365,195 395,203 440,208 480,214 510,224 550,235 600,250 640,262 690,282 730,291 780,298 800,301 830,305 870,316 920,329 960,342 1000,354 1030,358 1055,358 1090,354 1120,350 1160,347 1185,344 1195,344');
line(price, '#a000a0', '0,272 15,277 30,281 65,284 80,287 97,294 130,294 150,293 170,288 195,286 225,287 250,290 280,296 310,297 350,299 363,303 375,309 400,312 430,313 450,311 475,314 497,321 522,334 560,347 600,361 640,380 675,402 705,418 730,421 770,419 820,420 845,428 870,434 900,444 920,449 945,461 975,474 1005,482 1030,482 1050,474 1085,450 1110,438 1135,425 1150,418 1165,411 1180,401 1195,396');
line(price, '#d8d840', '0,381 5,384 15,384 22,376 33,367 40,355 50,347 60,343 68,341 78,348 86,359 95,362 103,357 115,340 125,330 135,322 145,315 155,297 165,287 173,277 184,266 193,264 204,271 214,281 225,285 235,290 250,296 262,310 277,323 290,321 300,316 308,317 317,315 330,311 345,317 352,325 362,344 373,359 380,361 390,361 400,357 407,361 415,355 425,350 434,338 441,324 449,320 455,322 463,329 480,340 490,360 500,380 511,403 522,421 532,427 545,425 560,432 575,437 590,447 605,452 618,466 635,490 645,510 652,522 663,533 673,545 690,541 700,545 708,546 718,535 727,522 735,500 745,482 757,463 770,451 783,440 793,438 803,434 815,435 825,442 833,452 843,470 853,475 863,482 875,497 885,504 898,513 910,520 922,530 932,545 943,561 952,563 962,571 978,574 990,569 1000,569 1006,561 1016,551 1025,530 1040,498 1050,460 1058,430 1066,408 1076,374 1087,347 1100,333 1113,312 1123,304 1133,303 1142,298 1150,293 1160,293 1167,286 1180,269 1188,266 1195,275');
line(price, '#f0f0f0', '0,398 3,400 9,400 15,385 22,365 30,340 35,335 41,312 48,312 53,325 60,327 65,322 70,330 76,345 82,373 89,389 95,385 101,365 107,345 113,321 120,306 125,290 130,290 135,294 138,293 141,296 146,285 151,265 156,247 162,249 165,247 168,250 172,249 177,240 186,230 194,240 198,258 202,270 207,275 213,300 220,303 240,300 248,305 254,325 261,333 270,353 275,360 283,340 290,330 296,312 302,312 308,315 312,317 318,308 325,303 333,305 345,318 352,340 357,355 361,380 367,405 371,410 375,405 383,382 390,378 395,360 399,356 402,356 405,363 413,351 418,337 424,328 430,305 437,290 443,284 447,288 453,308 460,325 470,347 478,357 486,390 496,430 508,460 516,484 521,488 526,480 535,450 540,435 543,432 548,440 555,447 560,446 570,450 580,465 590,470 605,480 618,507 630,535 638,545 643,557 650,577 656,574 665,588 670,587 676,570 683,546 688,548 693,540 698,553 703,560 708,554 715,530 720,515 726,478 732,455 738,440 745,428 752,410 757,403 762,409 768,408 773,412 778,401 783,400 790,420 794,420 800,415 807,425 815,430 820,450 828,478 833,487 840,510 848,511 860,508 868,522 873,535 880,536 885,530 893,542 900,537 908,540 915,547 923,560 932,596 941,610 946,600 950,588 955,589 958,593 963,593 967,597 975,585 981,577 985,565 990,565 996,571 999,570 1005,548 1012,524 1017,505 1022,480 1030,455 1036,435 1043,408 1049,365 1057,330 1064,308 1072,270 1077,250 1085,250 1093,265 1101,278 1106,270 1111,260 1115,262 1118,268 1122,265 1127,272 1133,283 1137,282 1141,275 1144,278 1148,273 1153,284 1158,284 1164,270 1170,248 1176,242 1181,238 1187,257 1191,275 1195,275');

// crosshair, extremes and cursor price
add(price, 'path', { d: 'M0 219.5H1241', stroke: '#909090' });
add(price, 'path', { d: 'M33 145V237M33 353V701', stroke: '#b0b020', 'stroke-width': 2 });
add(price, 'text', { x: 28, y: 275, class: 'note', style: 'fill: #c8c820' }, '9');
add(price, 'path', { d: 'M155 191L188 195L190 203M899 650L933 655', fill: 'none', stroke: '#d0d0d0' });
add(price, 'text', { x: 188, y: 211, class: 'note' }, '900');
add(price, 'text', { x: 875, y: 645, class: 'note' }, '880');
add(price, 'rect', { x: 1241, y: 219, width: 26, height: 19, fill: '#0000c0' });
add(price, 'text', { x: 1242, y: 234, class: 'note' }, '898');

// MACD pane
const macd = document.getElementById('macd');
for (let v = -2; v <= 3; v++) {
    const y = 867 - v * 39;
    add(macd, 'path', { d: `M0 ${y + 0.5}H1241`, stroke: '#500000', 'stroke-dasharray': '1 4' });
    add(macd, 'text', { x: v < 0 ? 1241 : 1244, y: y + 9, class: 'axis' }, v.toFixed(1));
}
add(macd, 'path', { d: 'M0 723.5H1241V950.5M0 950.5H1290', fill: 'none', stroke: '#a00000' });

const hist = `0 0,12 1,16 14,21 24,29 33,36 34,42 40,48 33,53 20,58 10,63 12,69 4,73 -3,77 -13,81 -25,86 -36,90 -36,95 -26,99 -18,104 -5,
108 8,112 20,118 25,125 34,131 25,138 18,145 14,150 22,156 31,160 26,165 18,172 8,177 7,181 10,189 7,193 -3,198 -16,203 -27,208 -33,
214 -42,219 -39,226 -33,232 -34,238 -27,243 -19,249 -20,255 -26,262 -25,268 -30,274 -28,280 -15,285 -1,290 4,295 15,300 19,312 14,
318 14,322 18,328 18,334 14,340 8,345 -3,350 -12,355 -22,360 -30,365 -45,371 -44,376 -33,382 -10,388 -1,393 8,398 18,405 20,412 20,
420 28,428 28,434 42,438 43,445 42,450 28,456 15,460 3,464 -13,470 -21,480 -26,488 -38,494 -50,502 -55,510 -48,516 -45,522 -40,
528 -18,533 -3,538 14,543 26,550 24,556 18,562 24,570 18,576 10,582 3,588 1,594 8,600 2,605 4,610 0,612 -5,617 -13,622 -13,629 -21,
635 -18,639 -20,648 -28,655 -14,665 -12,670 -6,674 3,678 16,682 28,690 36,695 28,700 18,704 17,708 22,716 36,721 45,725 54,729 62,
734 57,738 58,742 61,747 54,752 50,756 50,760 38,764 28,768 24,773 13,777 15,781 9,785 1,789 -12,794 -15,799 -11,804 -15,808 -20,
815 -25,819 -32,825 -42,830 -49,836 -46,841 -52,846 -45,851 -34,856 -30,860 -25,865 -18,871 -27,877 -22,882 -14,888 -9,897 -6,901 0,
907 3,912 0,916 2,919 -1,923 -6,927 -15,932 -21,941 -22,946 -12,949 0,953 5,958 2,963 7,967 5,972 15,976 17,980 20,985 28,989 28,
993 23,998 22,1005 34,1011 41,1015 36,1019 44,1027 58,1031 54,1036 60,1040 66,1045 67,1053 71,1062 63,1075 62,1080 52,1083 36,
1088 26,1092 8,1096 -10,1101 -18,1105 -20,1114 -23,1118 -30,1127 -35,1131 -44,1136 -44,1144 -35,1153 -38,1157 -37,1164 -22,1169 -9,
1175 -8,1179 -1,1183 -8,1188 -18,1192 -29,1197 -30`.split(',').map(s => s.trim().split(' ').map(Number));

let k = 0;
for (let x = 3; x < 1197; x += 4.33) {
    while (hist[k + 1][0] < x) k++;
    const [xa, va] = hist[k];
    const [xb, vb] = hist[k + 1];
    const v = va + (vb - va) * (x - xa) / (xb - xa);
    const px = Math.round(x) + 0.5;
    add(macd, 'path', { d: `M${px} 867V${867 - v}`, stroke: v > 0 ? '#c04040' : '#60d0d0' });
}

line(macd, '#e8e8e8', '0,887 8,886 14,882 22,868 30,855 38,846 43,840 48,839 55,843 58,845 65,843 71,849 77,861 82,873 88,878 93,880 99,877 104,869 112,853 118,846 125,836 133,835 140,837 147,834 152,825 158,819 162,821 167,821 175,822 182,820 188,820 193,827 200,843 208,853 213,865 218,869 225,870 230,875 238,876 245,877 252,885 262,890 270,898 275,902 281,898 288,885 296,877 304,875 312,876 320,870 328,865 334,864 342,869 348,870 355,885 362,900 368,913 375,914 380,908 388,900 398,886 408,883 415,875 422,865 428,850 435,840 440,839 446,837 452,843 458,850 468,860 478,870 488,890 498,910 510,928 517,939 521,940 526,935 532,926 540,908 545,905 552,904 560,896 570,896 578,897 585,899 592,896 605,898 612,902 622,912 630,918 637,920 645,930 651,934 658,930 665,931 673,926 680,908 690,895 697,896 703,897 710,890 718,872 725,850 730,840 738,830 745,820 755,811 759,807 768,810 774,812 780,811 786,822 794,828 799,829 806,839 814,846 820,858 830,877 841,893 850,895 862,895 870,905 878,907 886,904 894,907 902,901 920,901 930,917 936,918 941,923 948,911 958,909 968,906 976,897 985,885 992,883 1000,877 1008,860 1016,848 1025,831 1036,805 1046,788 1055,765 1062,759 1070,743 1076,734 1080,733 1087,738 1095,756 1103,768 1110,769 1120,785 1128,795 1135,807 1142,813 1148,815 1158,828 1165,825 1173,821 1180,819 1186,828 1192,839 1195,844');
line(macd, '#e8e840', '0,887 12,887 20,884 28,876 38,865 48,855 55,851 65,849 75,850 82,857 90,864 98,868 107,869 115,862 130,851 145,844 158,834 170,827 185,823 195,824 207,834 215,846 225,857 240,866 250,874 262,883 274,890 284,891 295,888 308,882 325,874 342,869 352,874 362,883 374,897 386,900 398,897 410,889 425,877 437,862 448,852 458,850 468,853 482,866 496,885 510,908 522,922 532,926 545,919 560,909 575,902 590,899 610,898 625,904 640,913 650,921 660,925 673,927 682,922 697,908 710,900 722,887 735,865 748,845 762,826 775,818 783,816 795,820 805,825 818,834 828,848 840,865 850,878 862,887 875,897 890,901 905,902 920,901 932,904 944,913 955,912 970,911 985,902 1000,890 1012,875 1025,855 1040,825 1055,795 1065,775 1075,757 1085,751 1093,751 1105,758 1120,770 1135,790 1148,803 1158,812 1170,817 1182,818 1190,823 1195,829');

// time axis
add(macd, 'text', { x: -1, y: 969, class: 'time' }, '0');
add(macd, 'text', { x: 41, y: 969, class: 'time', style: 'fill: #e04040' }, '9');
add(macd, 'path', { d: 'M42.5 951V955', stroke: '#a00000' });
['09:46', '10:02', '10:18', '10:34', '10:50', '11:06', '11:22', '13:38', '13:54',
    '14:10', '14:26', '14:42', '14:58', '15:14', '15:30', '15:46'].forEach((t, i) => {
    const x = Math.round(97 + i * 69.1);
    add(macd, 'path', { d: `M${x + 0.5} 951V955`, stroke: '#a00000' });
    add(macd, 'text', { x, y: 969, class: 'time' }, t);
});
```
